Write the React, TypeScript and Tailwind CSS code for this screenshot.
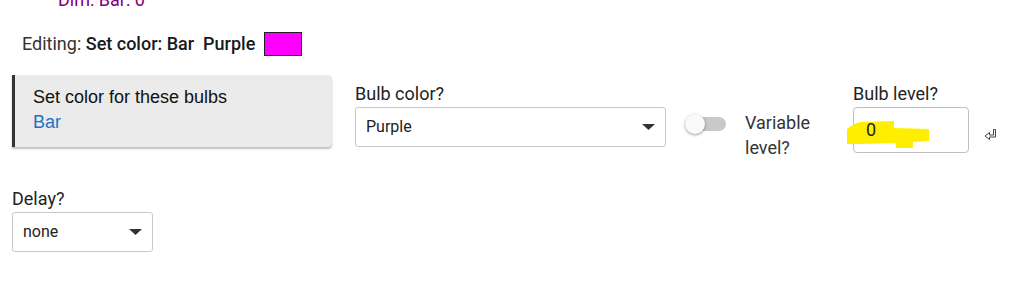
import React from "react";

function Arrow() {
  return (
    <svg width="13" height="6" viewBox="0 0 13 6" className="shrink-0">
      <path d="M0 0 L13 0 L6.5 6 Z" fill="#333" />
    </svg>
  );
}

function ReturnIcon() {
  return (
    <svg width="13" height="13" viewBox="0 0 13 13">
      <path
        d="M11.5 0.5 V8 H5.5 V10.5 L1 7 L5.5 3.5 V6 H9.5 V0.5 Z"
        fill="none"
        stroke="#444"
        strokeWidth="1"
        strokeLinejoin="miter"
      />
    </svg>
  );
}

export default function App() {
  return (
    <div className="w-[1024px] h-[297px] overflow-hidden bg-white text-[#222] font-['Roboto',sans-serif]">
      <div className="pl-[58px] -mt-[12px] h-[24px] text-[18px] leading-[24px] text-[#800080] whitespace-nowrap">Dim: Bar: 0</div>
      <div className="flex items-center pl-[22px] mt-[20px] h-[24px] text-[18px] leading-[24px]">
        <span className="text-[#333]">Editing:&nbsp;</span>
        <span className="font-medium text-[#1a1a1a] whitespace-pre">Set color: Bar  Purple</span>
        <span className="ml-[9px] w-[38px] h-[24px] bg-[#ff00ff] border border-[#222]"></span>
      </div>
      <div className="flex items-start mt-[19px]">
        <div className="ml-[12px] w-[320px] h-[72px] shrink-0 bg-[#ebebeb] border-l-[3px] border-[#333] rounded-r-[4px] shadow-[0_2px_2px_rgba(0,0,0,0.25)] pl-[18px] pt-[10px] font-['Liberation_Sans',Arial,sans-serif] text-[18px] leading-[25px]">
          <div className="text-[#111]">Set color for these bulbs</div>
          <div className="text-[#1a73c8]">Bar</div>
        </div>
        <div className="ml-[23px] mt-[8px] flex flex-col shrink-0">
          <div className="text-[18px] leading-[22px] text-[#222]">Bulb color?</div>
          <div className="mt-[2px] w-[311px] h-[40px] border border-[#c8c8c8] rounded-[3px] flex items-center justify-between pl-[10px] pr-[10px] text-[16px] text-[#222]">
            <span>Purple</span>
            <Arrow />
          </div>
        </div>
        <div className="ml-[19px] mt-[39px] relative w-[41px] h-[20px] flex items-center shrink-0">
          <div className="ml-[5px] w-[36px] h-[14px] rounded-full bg-[#c9c9c9]"></div>
          <div className="absolute left-0 top-0 w-[20px] h-[20px] rounded-full bg-[#fafafa] shadow-[0_1px_3px_rgba(0,0,0,0.4)]"></div>
        </div>
        <div className="ml-[19px] mt-[35px] w-[80px] shrink-0 text-[18px] leading-[25px] text-[#333]">Variable level?</div>
        <div className="ml-[28px] mt-[8px] flex flex-col shrink-0">
          <div className="text-[18px] leading-[22px] text-[#222]">Bulb level?</div>
          <div className="mt-[2px] relative w-[116px] h-[46px] border border-[#c0c0c0] rounded-[4px]">
            <svg className="absolute left-[-8px] top-[12px]" width="85" height="30" viewBox="0 0 85 30">
              <path
                d="M1 9 L8 4 L15 2 L48 1 L48 8 L83 9 L83 21 L67 22 L67 28 L50 28 L50 23 L15 24 L1 24 Z"
                fill="#ffee00"
              />
            </svg>
            <span className="absolute left-[12px] top-[12px] text-[18px] leading-[20px] text-[#222]">0</span>
          </div>
        </div>
        <div className="ml-[15px] mt-[54px] shrink-0">
          <ReturnIcon />
        </div>
      </div>
      <div className="pl-[12px] mt-[28px] flex flex-col">
        <div className="text-[18px] leading-[22px] text-[#222]">Delay?</div>
        <div className="mt-[2px] w-[141px] h-[40px] border border-[#c8c8c8] rounded-[3px] flex items-center justify-between pl-[10px] pr-[10px] text-[16px] text-[#222]">
          <span>none</span>
          <Arrow />
        </div>
      </div>
    </div>
  );
}
